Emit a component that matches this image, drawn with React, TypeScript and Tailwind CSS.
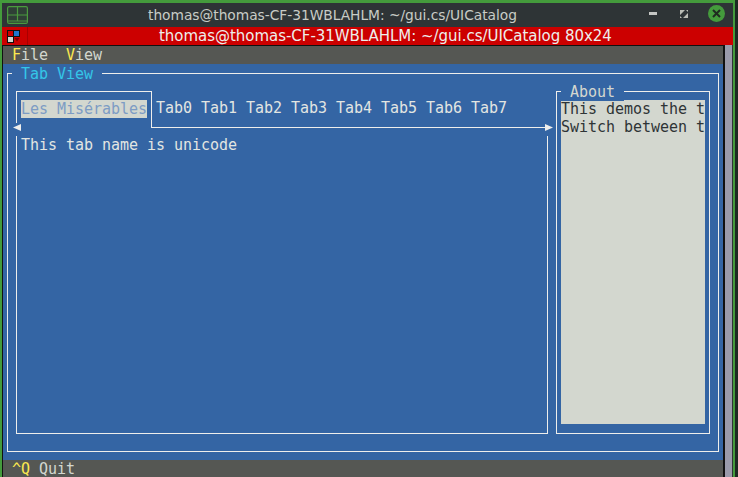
const TABS = ["Tab0", "Tab1", "Tab2", "Tab3", "Tab4", "Tab5", "Tab6", "Tab7"];
const LINE = "border-[#eeeeec]";

function AppIcon() {
  return (
    <svg width="21" height="18" viewBox="0 0 21 18" fill="none" stroke="#4a9a3e" strokeWidth="1.2">
      <rect x="0.6" y="0.6" width="19.8" height="16.8" rx="1.5" fill="#2f3f36" />
      <path d="M0.6 9H20.4M10.5 0.6V15M0.6 15H20.4" />
    </svg>
  );
}

function TermIcon() {
  return (
    <svg width="13" height="13" viewBox="0 0 13 13">
      <rect x="0.5" y="0.5" width="6" height="6" fill="#cc0000" stroke="#111" />
      <rect x="6.5" y="0.5" width="6" height="6" fill="#1f78d1" stroke="#111" />
      <rect x="0.5" y="6.5" width="6" height="6" fill="#d3d7cf" stroke="#111" />
      <path d="M7.5 8H12.5L10 11.5Z" fill="#7a0000" />
    </svg>
  );
}

export default function App() {
  return (
    <div className="w-[738px] h-[477px] overflow-hidden bg-[#1c2a22] font-['DejaVu_Sans_Mono',monospace] text-[15px] leading-[18px] tracking-[-0.03px]">
      <div className="w-[735px] h-full flex flex-col bg-[#2e3436] border-t-[3px] border-r-2 border-[#449b3c]">
        {/* window title bar */}
        <div className="h-[24px] shrink-0 flex items-center relative pl-[5px] border-l-2 border-[#449b3c] font-['DejaVu_Sans',sans-serif] text-[13.8px] text-[#c8ccc6] whitespace-nowrap">
          <AppIcon />
          <span className="ml-[120px]">thomas@thomas-CF-31WBLAHLM: ~/gui.cs/UICatalog</span>
          <div className="absolute left-[647px] top-[9px] w-[8px] h-[3px] bg-[#c4c6c4]" />
          <svg className="absolute left-[678px] top-[7px]" width="8" height="8" viewBox="0 0 8 8" fill="#babdb6">
            <path d="M0 0H5L0 5ZM8 8H3L8 3ZM6 0H8V2ZM0 6L2 8H0Z" />
          </svg>
          <div className="absolute left-[706px] top-[2px] w-[17px] h-[17px] rounded-full bg-[#449b3c] flex items-center justify-center text-[#1f2a20]">
            <svg width="9" height="9" viewBox="0 0 9 9" stroke="currentColor" strokeWidth="2">
              <path d="M1 1L8 8M8 1L1 8" />
            </svg>
          </div>
        </div>

        {/* terminal tab bar */}
        <div className="h-[18px] shrink-0 flex items-center bg-[#cc0000] pl-[5px] font-['DejaVu_Sans',sans-serif] text-[15px] text-[#eeeeec] border-l-2 border-[#449b3c] whitespace-nowrap">
          <TermIcon />
          <div className="ml-[7px] w-[1px] h-full bg-[#a80000]" />
          <span className="ml-[131px]">thomas@thomas-CF-31WBLAHLM: ~/gui.cs/UICatalog 80x24</span>
        </div>

        <div className="flex-1 min-h-0 flex">
          <div className="w-[2px] bg-[#449b3c]" />
          <div className="w-[721px] flex flex-col border-t border-l border-[#111] bg-[#3465a4] text-[#d3d7cf]">
            {/* menu */}
            <div className="h-[18px] shrink-0 bg-[#555753] pl-[9px] whitespace-pre">
              <span className="text-[#fce94f]">F</span>ile  <span className="text-[#fce94f]">V</span>iew
            </div>

            {/* main frame */}
            <div className="flex-1 min-h-0 px-[4px] pt-[9px] pb-[8px]">
              <div className={`relative h-full border ${LINE} w-[712px] pl-[8px] pt-[17px] pr-[9px] pb-[17px] flex`}>
                <span className="absolute left-[4px] top-[-9px] px-[9px] bg-[#3465a4] text-[#34c6e8] whitespace-nowrap">Tab View</span>

                {/* tab view */}
                <div className="w-[532px] shrink-0 flex flex-col text-[#e2e5e2]">
                  <div className="flex h-[37px] shrink-0">
                    <div className={`relative w-[136px] shrink-0 border-t border-x ${LINE} pl-[4px] pt-[8px]`}>
                      <span className="block w-[126px] h-[18px] bg-[#d3d7cf] text-[#7d9cc4] whitespace-nowrap">Les Misérables</span>
                      <svg className="absolute left-[-4px] bottom-[-4px] bg-[#3465a4]" width="9" height="9" viewBox="0 0 9 9" fill="#eeeeec">
                        <path d="M0 4.5L8 1V8Z" />
                      </svg>
                    </div>
                    <div className={`relative flex-1 border-b ${LINE} pl-[4px] pt-[8px] whitespace-pre`}>
                      {TABS.join(" ")}
                      <svg className="absolute right-[-5px] bottom-[-5px]" width="9" height="9" viewBox="0 0 9 9" fill="#eeeeec">
                        <path d="M9 4.5L1 1V8Z" />
                      </svg>
                    </div>
                  </div>
                  <div className={`mt-[8px] flex-1 min-h-0 border-x border-b ${LINE} pl-[4px]`}>This tab name is unicode</div>
                </div>

                {/* about frame */}
                <div className={`relative ml-[8px] w-[154px] shrink-0 border ${LINE} px-[4px] pt-[8px] pb-[9px]`}>
                  <span className="absolute left-[4px] top-[-9px] px-[9px] bg-[#3465a4]">About</span>
                  <div className="h-full bg-[#d3d7cf] text-[#2e3436] overflow-hidden whitespace-pre">
                    <div>This demos the t</div>
                    <div>Switch between t</div>
                  </div>
                </div>
              </div>
            </div>

            {/* status bar */}
            <div className="h-[17px] shrink-0 bg-[#555753] pl-[9px] whitespace-pre">
              <span className="text-[#fce94f]">^Q</span> Quit
            </div>
          </div>

          {/* scrollbar */}
          <div className="w-[2px] bg-[#111]" />
          <div className="w-[7px] bg-[#9a9aaa]" />
          <div className="w-[1px] bg-[#2e3436]" />
        </div>
      </div>
    </div>
  );
}
